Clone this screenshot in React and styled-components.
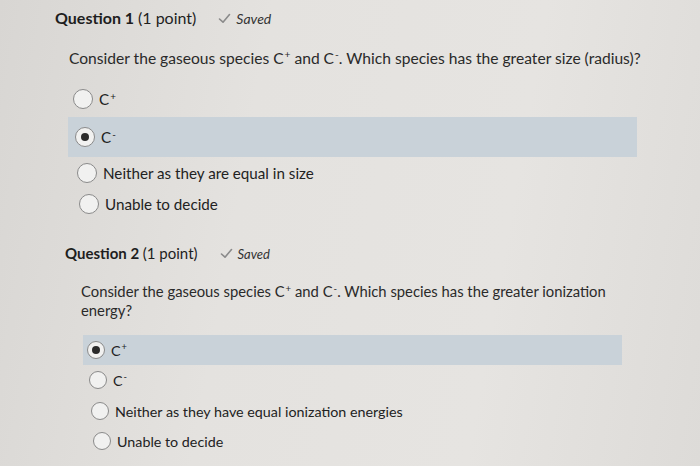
import React from "react";
import styled, { createGlobalStyle } from "styled-components";

const Global = createGlobalStyle`
  html, body { margin: 0; padding: 0; }
  body {
    width: 700px; height: 466px; overflow: hidden;
    background: linear-gradient(100deg, #d8d6d3 0%, #e4e2df 35%, #e6e4e1 70%, #dddbd8 100%);
    font-family: Lato, "Open Sans", sans-serif;
    color: #2a2a2a;
  }
`;

const Page = styled.div`
  display: flex;
  flex-direction: column;
  padding-top: 8px;
`;

const Question = styled.section`
  display: flex;
  flex-direction: column;
  padding-left: ${(p) => p.$indent}px;
  margin-bottom: ${(p) => p.$gapAfter || 0}px;
`;

const Header = styled.div`
  display: flex;
  align-items: baseline;
  height: 26px;
`;

const Title = styled.h2`
  margin: 0;
  font-size: ${(p) => p.$size}px;
  font-weight: 700;
  color: #1e1e1e;
`;

const Points = styled.span`
  font-weight: 400;
`;

const Saved = styled.span`
  display: inline-flex;
  align-items: center;
  gap: 5px;
  margin-left: 22px;
  font-style: italic;
  font-size: ${(p) => p.$size}px;
  color: #333;
`;

const Prompt = styled.p`
  margin: ${(p) => p.$mt}px 0 0 ${(p) => p.$ml}px;
  font-size: ${(p) => p.$size}px;
  line-height: ${(p) => p.$lh}px;
  color: #2a2a2a;
  width: ${(p) => p.$width}px;
`;

const Options = styled.div`
  display: flex;
  flex-direction: column;
  margin-top: ${(p) => p.$mt}px;
  margin-left: ${(p) => p.$ml}px;
  width: ${(p) => p.$width}px;
`;

const Option = styled.div`
  display: flex;
  align-items: center;
  gap: 6px;
  height: ${(p) => p.$h}px;
  padding-left: ${(p) => p.$pl}px;
  background: ${(p) => (p.$selected ? "#c9d2d9" : "transparent")};
  font-size: ${(p) => p.$size}px;
  color: #222;
`;

const Radio = styled.span`
  box-sizing: border-box;
  width: ${(p) => p.$d}px;
  height: ${(p) => p.$d}px;
  border-radius: 50%;
  border: 1.5px solid #8a8a8a;
  background: #f1f1f0;
  display: flex;
  align-items: center;
  justify-content: center;
  flex: none;
  &::after {
    content: "";
    width: ${(p) => (p.$checked ? 8 : 0)}px;
    height: ${(p) => (p.$checked ? 8 : 0)}px;
    border-radius: 50%;
    background: #2b2b2b;
  }
`;

const Sup = styled.span`
  font-size: 0.65em;
  line-height: 1;
  vertical-align: 0.55em;
  margin-left: 1px;
`;

const Check = () => (
  <svg width="13" height="11" viewBox="0 0 13 11">
    <path d="M1.5 6 L5 9.2 L11.5 1.5" fill="none" stroke="#8a8a8a" strokeWidth="1.6" strokeLinecap="round" strokeLinejoin="round" />
  </svg>
);

const Cp = () => (<>C<Sup>+</Sup></>);
const Cm = () => (<>C<Sup>-</Sup></>);

const q1 = [
  { label: <Cp />, checked: false, h: 36 },
  { label: <Cm />, checked: true, h: 40 },
  { label: "Neither as they are equal in size", checked: false, h: 32 },
  { label: "Unable to decide", checked: false, h: 30 },
];

const q2 = [
  { label: <Cp />, checked: true, h: 30 },
  { label: <Cm />, checked: false, h: 30 },
  { label: "Neither as they have equal ionization energies", checked: false, h: 32 },
  { label: "Unable to decide", checked: false, h: 28 },
];

export default function App() {
  return (
    <>
      <Global />
      <Page>
        <Question $indent={55} $gapAfter={25}>
          <Header>
            <Title $size={16}>Question 1 <Points>(1 point)</Points></Title>
            <Saved $size={14}><Check />Saved</Saved>
          </Header>
          <Prompt $mt={12} $ml={14} $size={15.6} $lh={24} $width={600}>
            Consider the gaseous species <Cp /> and <Cm />. Which species has the greater size (radius)?
          </Prompt>
          <Options $mt={11} $ml={13} $width={569}>
            {q1.map((o, i) => (
              <Option key={i} $h={o.h} $pl={5 + i * 2} $selected={o.checked} $size={15.2}>
                <Radio $d={20} $checked={o.checked} />
                <span>{o.label}</span>
              </Option>
            ))}
          </Options>
        </Question>
        <Question $indent={65}>
          <Header>
            <Title $size={15}>Question 2 <Points>(1 point)</Points></Title>
            <Saved $size={13}><Check />Saved</Saved>
          </Header>
          <Prompt $mt={12} $ml={16} $size={14.8} $lh={19} $width={545}>
            Consider the gaseous species <Cp /> and <Cm />. Which species has the greater ionization energy?
          </Prompt>
          <Options $mt={15} $ml={18} $width={539}>
            {q2.map((o, i) => (
              <Option key={i} $h={o.h} $pl={4 + i * 2} $selected={o.checked} $size={14.3}>
                <Radio $d={18} $checked={o.checked} />
                <span>{o.label}</span>
              </Option>
            ))}
          </Options>
        </Question>
      </Page>
    </>
  );
}
